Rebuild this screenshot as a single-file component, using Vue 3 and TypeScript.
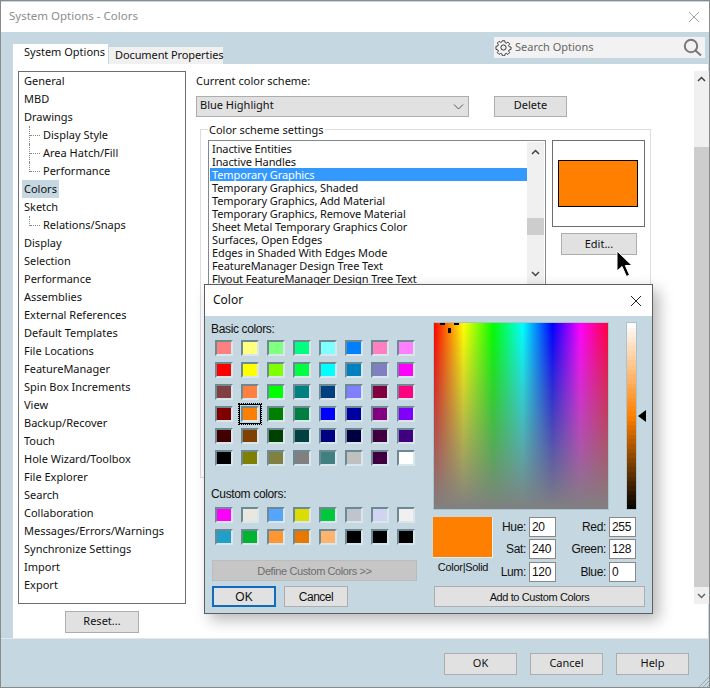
<script setup lang="ts">
type TreeItem = { label: string; child?: boolean; last?: boolean; active?: boolean }
const tree: TreeItem[] = [
  { label: 'General' }, { label: 'MBD' }, { label: 'Drawings' },
  { label: 'Display Style', child: true }, { label: 'Area Hatch/Fill', child: true }, { label: 'Performance', child: true, last: true },
  { label: 'Colors', active: true }, { label: 'Sketch' }, { label: 'Relations/Snaps', child: true, last: true },
  { label: 'Display' }, { label: 'Selection' }, { label: 'Performance' }, { label: 'Assemblies' },
  { label: 'External References' }, { label: 'Default Templates' }, { label: 'File Locations' },
  { label: 'FeatureManager' }, { label: 'Spin Box Increments' }, { label: 'View' }, { label: 'Backup/Recover' },
  { label: 'Touch' }, { label: 'Hole Wizard/Toolbox' }, { label: 'File Explorer' }, { label: 'Search' },
  { label: 'Collaboration' }, { label: 'Messages/Errors/Warnings' }, { label: 'Synchronize Settings' },
  { label: 'Import' }, { label: 'Export' },
]
const schemeItems = [
  'Inactive Entities', 'Inactive Handles', 'Temporary Graphics', 'Temporary Graphics, Shaded',
  'Temporary Graphics, Add Material', 'Temporary Graphics, Remove Material', 'Sheet Metal Temporary Graphics Color',
  'Surfaces, Open Edges', 'Edges in Shaded With Edges Mode', 'FeatureManager Design Tree Text', 'Flyout FeatureManager Design Tree Text',
]
const basic = [
  '#ff8080', '#ffff80', '#80ff80', '#00ff80', '#80ffff', '#0080ff', '#ff80c0', '#ff80ff',
  '#ff0000', '#ffff00', '#80ff00', '#00ff40', '#00ffff', '#0080c0', '#8080c0', '#ff00ff',
  '#804040', '#ff8040', '#00ff00', '#008080', '#004080', '#8080ff', '#800040', '#ff0080',
  '#800000', '#ff8000', '#008000', '#008040', '#0000ff', '#0000a0', '#800080', '#8000ff',
  '#400000', '#804000', '#004000', '#004040', '#000080', '#000040', '#400040', '#400080',
  '#000000', '#808000', '#808040', '#808080', '#408080', '#c0c0c0', '#400040', '#ffffff',
]
const custom = [
  '#ff00ff', '#e8e8e0', '#55a5ff', '#dcdc00', '#00c83c', '#c0c4cc', '#d0d4f0', '#f0f0f0',
  '#20a0c8', '#00b432', '#ff9632', '#e87800', '#ffb46e', '#000000', '#000000', '#000000',
]
const lumSteps = Array.from({ length: 40 }, (_, i) => {
  const l = 1 - (i + 0.5) / 40
  const mix = (a: number, b: number, t: number) => Math.round(a + (b - a) * t)
  if (l > 0.5) {
    const t = (l - 0.5) * 2
    return `rgb(255,${mix(128, 255, t)},${mix(0, 255, t)})`
  }
  const t = l * 2
  return `rgb(${mix(0, 255, t)},${mix(0, 128, t)},0)`
})
const hsl = [['Hue', '20'], ['Sat', '240'], ['Lum', '120']]
const rgb = [['Red', '255'], ['Green', '128'], ['Blue', '0']]
</script>

<template>
  <div class="window">
    <header class="titlebar">
      <span class="title">System Options - Colors</span>
      <svg class="close" width="12" height="12" viewBox="0 0 12 12"><path d="M1 1l10 10M11 1L1 11" stroke="#a0a0a0" stroke-width="1" fill="none" /></svg>
    </header>
    <div class="tabbar">
      <div class="tabs">
        <span class="tab active">System Options</span>
        <span class="tab">Document Properties</span>
      </div>
      <div class="search">
        <svg width="17" height="17" viewBox="0 0 17 17" fill="none" stroke="#333" stroke-width="1">
          <circle cx="8.5" cy="8.5" r="2.6" />
          <path d="M7.2 1.2h2.6l.4 2 1.3.6 1.8-1.1 1.8 1.8-1.1 1.8.6 1.3 2 .4v2.6l-2 .4-.6 1.3 1.1 1.8-1.8 1.8-1.8-1.1-1.3.6-.4 2H7.2l-.4-2-1.3-.6-1.8 1.1-1.8-1.8 1.1-1.8-.6-1.3-2-.4V7.2l2-.4.6-1.3-1.1-1.8 1.8-1.8 1.8 1.1 1.3-.6z" transform="translate(.6 .6) scale(.93)" />
        </svg>
        <span class="search-text">Search Options</span>
        <svg class="mag" width="19" height="19" viewBox="0 0 19 19" fill="none" stroke="#777" stroke-width="2"><circle cx="8" cy="8" r="6.2" /><path d="M12.5 12.5l5.5 5" /></svg>
      </div>
    </div>

    <main class="page">
      <aside class="side">
        <ul class="tree">
          <li v-for="(t, i) in tree" :key="i" class="node" :class="{ child: t.child }">
            <span v-if="t.child" class="dots" :class="{ last: t.last }"></span>
            <span class="node-label" :class="{ active: t.active }">{{ t.label }}</span>
          </li>
        </ul>
        <button class="btn reset">Reset...</button>
      </aside>

      <section class="panel">
        <div class="scheme-label">Current color scheme:</div>
        <div class="scheme-row">
          <div class="combo">
            <span>Blue Highlight</span>
            <svg width="11" height="6" viewBox="0 0 11 6" fill="none" stroke="#555"><path d="M1 .5l4.5 4.5L10 .5" /></svg>
          </div>
          <button class="btn delete">Delete</button>
        </div>
        <fieldset class="group">
          <legend>Color scheme settings</legend>
          <div class="group-row">
            <div class="list">
              <div class="list-items">
                <div v-for="(s, i) in schemeItems" :key="s" class="list-item" :class="{ selected: i === 2 }">{{ s }}</div>
              </div>
              <div class="list-scroll">
                <svg width="9" height="6" viewBox="0 0 9 6" fill="none" stroke="#444" stroke-width="1.5"><path d="M1 5l3.5-3.5L8 5" /></svg>
                <span class="list-thumb"></span>
                <svg width="9" height="6" viewBox="0 0 9 6" fill="none" stroke="#444" stroke-width="1.5"><path d="M1 1l3.5 3.5L8 1" /></svg>
              </div>
            </div>
            <div class="preview-col">
              <div class="preview"><div class="preview-fill"></div></div>
              <button class="btn edit">Edit...</button>
            </div>
          </div>
        </fieldset>
      </section>

      <div class="vscroll">
        <svg width="9" height="6" viewBox="0 0 9 6" fill="none" stroke="#444" stroke-width="1.5"><path d="M1 5l3.5-3.5L8 5" /></svg>
        <span class="vthumb"></span>
        <svg width="9" height="6" viewBox="0 0 9 6" fill="none" stroke="#666" stroke-width="1.5"><path d="M1 1l3.5 3.5L8 1" /></svg>
      </div>
    </main>

    <footer class="footer">
      <button class="btn foot">OK</button>
      <button class="btn foot">Cancel</button>
      <button class="btn foot">Help</button>
      <svg class="grip" width="11" height="11" viewBox="0 0 11 11" stroke="#9aa8b0" fill="none"><path d="M11 1L1 11M11 5l-6 6M11 9l-2 2" /></svg>
    </footer>

    <svg class="cursor" width="18" height="28" viewBox="0 0 18 28"><path d="M1 1v20l5-4.5 4.5 10 3-1.5-4.2-9.5H16z" fill="#000" stroke="#fff" stroke-width="1" /></svg>

    <div class="dialog">
      <div class="dlg-title">
        <span>Color</span>
        <svg width="12" height="12" viewBox="0 0 12 12"><path d="M1 1l10 10M11 1L1 11" stroke="#222" stroke-width="1" fill="none" /></svg>
      </div>
      <div class="dlg-body">
        <div class="dlg-left">
          <div class="dlg-label">Basic colors:</div>
          <div class="swatches">
            <span v-for="(c, i) in basic" :key="i" class="swatch" :class="{ picked: i === 25 }" :style="{ background: c }"></span>
          </div>
          <div class="dlg-label custom-label">Custom colors:</div>
          <div class="swatches">
            <span v-for="(c, i) in custom" :key="i" class="swatch" :style="{ background: c }"></span>
          </div>
          <button class="dbtn define">Define Custom Colors &gt;&gt;</button>
          <div class="dlg-actions">
            <button class="dbtn ok">OK</button>
            <button class="dbtn cancel">Cancel</button>
          </div>
        </div>
        <div class="dlg-right">
          <div class="picker-row">
            <div class="spectrum">
              <i class="cross c1"></i><i class="cross c2"></i><i class="cross c3"></i>
            </div>
            <div class="lum">
              <span v-for="(c, i) in lumSteps" :key="i" :style="{ background: c }"></span>
            </div>
            <svg class="lum-arrow" width="8" height="12" viewBox="0 0 8 12"><path d="M8 0v12L0 6z" fill="#000" /></svg>
          </div>
          <div class="values-row">
            <div class="solid-col">
              <div class="solid"></div>
              <div class="solid-label">Color|Solid</div>
            </div>
            <div class="fields hsl">
              <label v-for="f in hsl" :key="f[0]" class="field"><span>{{ f[0] }}:</span><b>{{ f[1] }}</b></label>
            </div>
            <div class="fields rgb">
              <label v-for="f in rgb" :key="f[0]" class="field"><span>{{ f[0] }}:</span><b>{{ f[1] }}</b></label>
            </div>
          </div>
          <button class="dbtn add">Add to Custom Colors</button>
        </div>
      </div>
    </div>
  </div>
</template>

<style>
html, body { margin: 0; background: #fff; }
</style>

<style scoped>
* { box-sizing: border-box; }
.window {
  position: relative; width: 710px; height: 688px; overflow: hidden;
  padding-top: 1px; background: #c5d7e0;
  border: 1px solid #8a8a8a;
  display: flex; flex-direction: column;
  font: 11px/14px "Noto Sans", sans-serif; color: #111;
}
.titlebar { height: 30px; background: #fff; display: flex; align-items: center; justify-content: space-between; padding: 0 9px 2px 8px; flex: none; }
.title { color: #8d8d8d; font-size: 11.5px; }
.close { margin-top: 2px; }
.tabbar { height: 32px; flex: none; display: flex; justify-content: space-between; align-items: flex-start; padding: 5px 4px 0 12px; }
.tabs { display: flex; align-items: flex-end; height: 27px; padding-top: 7px; white-space: nowrap; }
.tab { height: 17px; width: 114px; padding: 0 0 2px 6px; background: #f0f0f0; display: flex; align-items: center; letter-spacing: -.1px; }
.tab.active { height: 20px; background: #fff; padding: 0 0 5px 11px; width: 95px; margin-right: 1px; letter-spacing: 0; }
.search { width: 211px; height: 21px; background: #f2f2f2; display: flex; align-items: center; padding: 0 3px 0 1px; }
.search-text { color: #666; margin: 0 0 2px 3px; flex: 1; }
.mag { flex: none; }
.page { height: 574px; margin-left: 12px; margin-right: 1px; background: #fff; display: flex; flex: none; padding: 7px 3px 0 5px; }
.side { width: 168px; flex: none; display: flex; flex-direction: column; align-items: center; }
.tree { list-style: none; margin: 0; padding: 0 0 0 1px; width: 168px; height: 533px; border: 1px solid #6e6e6e; }
.node { height: 18px; padding-left: 2px; display: flex; align-items: center; position: relative; }
.node.child { padding-left: 21px; }
.node-label { padding: 0 2px; height: 18px; line-height: 17px; white-space: nowrap; }
.node-label.active { background: #c5d7e0; }
.dots { position: absolute; left: 9px; top: 0; width: 10px; height: 18px; border-left: 1px dotted #888; }
.dots::after { content: ""; position: absolute; left: 0; top: 9px; width: 10px; border-top: 1px dotted #888; }
.dots.last { height: 10px; }
.btn { font: inherit; color: #111; background: #e1e1e1; border: 1px solid #adadad; padding: 0 0 2px; height: 22px; }
.reset { width: 74px; margin-top: 7px; }
.panel { width: 504px; flex: none; padding: 3px 0 0 10px; }
.scheme-label { height: 15px; line-height: 14px; }
.scheme-row { display: flex; margin-top: 7px; gap: 25px; }
.combo { width: 273px; height: 21px; background: #e1e1e1; border: 1px solid #adadad; display: flex; align-items: center; justify-content: space-between; padding: 0 4px 0 3px; }
.combo span { margin-bottom: 4px; }
.delete { width: 73px; height: 21px; padding-bottom: 3px; }
.group { margin: 6px 0 0 4px; width: 451px; height: 355px; border: 1px solid #dcdcdc; padding: 6px 5px 0 7px; min-width: 0; }
.group legend { padding: 0 1px; line-height: 13px; }
.group-row { display: flex; gap: 6px; margin-top: -2px; }
.list { width: 338px; height: 146px; border: 1px solid #828790; display: flex; padding: 1px; overflow: hidden; }
.list-items { width: 317px; flex: none; }
.list-item { height: 13px; line-height: 13px; padding-left: 2px; white-space: nowrap; letter-spacing: -.1px; }
.list-item.selected { background: #3399ff; color: #fff; }
.list-scroll { flex: 1; background: #f0f0f0; display: flex; flex-direction: column; align-items: center; padding: 7px 0; position: relative; justify-content: space-between; }
.list-thumb { position: absolute; left: 0; right: 0; top: 76px; height: 17px; background: #cdcdcd; }
.preview-col { display: flex; flex-direction: column; align-items: center; width: 93px; }
.preview { width: 93px; height: 87px; border: 1px solid #6e6e6e; padding: 19px 5px 0 5px; flex: none; }
.preview-fill { width: 80px; height: 47px; background: #ff8000; border: 1px solid #000; }
.edit { width: 76px; height: 22px; margin: 6px 0 0 1px; flex: none; padding: 0; }
.vscroll { width: 15px; height: 533px; background: #f0f0f0; flex: none; position: relative; display: flex; flex-direction: column; align-items: center; justify-content: space-between; padding: 5px 0; margin-left: 4px; }
.vthumb { position: absolute; left: 0; right: 0; top: 76px; bottom: 17px; background: #cdcdcd; }
.footer { flex: 1; display: flex; justify-content: flex-end; gap: 13px; padding: 14px 20px 0 0; border-top: 1px solid #e4e8ea; position: relative; }
.foot { width: 73px; height: 22px; }
.grip { position: absolute; right: 0; bottom: 0; }
.cursor { position: absolute; left: 615px; top: 249px; z-index: 1; }

.dialog { position: absolute; left: 203px; top: 283px; width: 449px; height: 330px; background: #c5d7e0; border: 1px solid #5e5e5e; box-shadow: 6px 6px 14px rgba(0,0,0,.28); font: 12px/14px "Liberation Sans", sans-serif; letter-spacing: -.35px; z-index: 2; }
.dlg-title { height: 31px; background: #fff; display: flex; align-items: center; justify-content: space-between; padding: 0 10px 2px 8px; font-family: "Noto Sans", sans-serif; letter-spacing: 0; }
.dlg-title svg { margin-top: 2px; }
.dlg-body { display: flex; padding: 0 0 0 6px; }
.dlg-left { width: 222px; flex: none; padding-top: 6px; }
.dlg-label { height: 14px; }
.swatches { display: grid; grid-template-columns: repeat(8, 18px); column-gap: 8px; row-gap: 6px; padding-left: 4px; margin-top: 4px; }
.swatch { height: 16px; width: 18px; border: 2px solid; border-color: #6d8994 #d9e6ec #d9e6ec #6d8994; position: relative; }
.swatch.picked { outline: 1px solid #000; outline-offset: 1px; }
.swatch.picked::after { content: ""; position: absolute; inset: -5px; border: 1px dotted #000; }
.custom-label { margin: 21px 0 6px; }
.dbtn { font: inherit; color: #111; background: #e1e1e1; border: 1px solid #adadad; padding: 0; display: block; }
.define { width: 205px; height: 21px; margin: 15px 0 0 1px; background: #c6c6c6; color: #6e6e6e; border-color: #bcbcbc; font-size: 11px; letter-spacing: -.4px; }
.dlg-actions { display: flex; gap: 8px; margin: 5px 0 0 1px; }
.ok { width: 64px; height: 21px; border: 2px solid #0f6cbd; }
.cancel { width: 64px; height: 21px; letter-spacing: -.5px; }
.dlg-right { width: 212px; flex: none; padding-top: 6px; }
.picker-row { display: flex; position: relative; height: 189px; }
.picker-row > * { flex: none; }
.spectrum { width: 176px; height: 188px; position: relative; border: 1px solid #a8c4d0; background: linear-gradient(to bottom, rgba(128,128,128,0), #808080), linear-gradient(to right, #ff0000, #ffff00 17%, #00ff00 34%, #00ffff 51%, #0000ff 68%, #ff00ff 84%, #ff0040); }
.cross { position: absolute; background: #000; }
.c1 { left: 6px; top: 0; width: 5px; height: 2px; }
.c2 { left: 20px; top: 0; width: 5px; height: 2px; }
.c3 { left: 14px; top: 5px; width: 3px; height: 5px; }
.lum { width: 11px; height: 188px; margin-left: 17px; display: flex; flex-direction: column; border: 1px solid #a8c4d0; }
.lum span { flex: 1; }
.lum-arrow { margin: 88px 0 0 1px; }
.values-row { display: flex; margin-top: 6px; }
.solid-col { width: 60px; flex: none; }
.solid { width: 60px; height: 41px; background: #ff8000; border-right: 1px solid #e8f0f4; border-bottom: 1px solid #e8f0f4; }
.solid-label { text-align: center; margin-top: 2px; white-space: nowrap; font-size: 11px; letter-spacing: -.3px; }
.fields { display: flex; flex-direction: column; gap: 2px; }
.fields .field:last-child { margin-top: 1px; }
.field { display: flex; align-items: center; justify-content: flex-end; height: 20px; gap: 3px; }
.field b { font-weight: 400; width: 27px; height: 20px; background: #fff; border: 1px solid #888; line-height: 18px; padding-left: 2px; }
.hsl { width: 63px; }
.rgb { width: 80px; }
.add { width: 211px; height: 21px; margin: 4px 0 0 1px; font-size: 11px; letter-spacing: -.4px; }
</style>
